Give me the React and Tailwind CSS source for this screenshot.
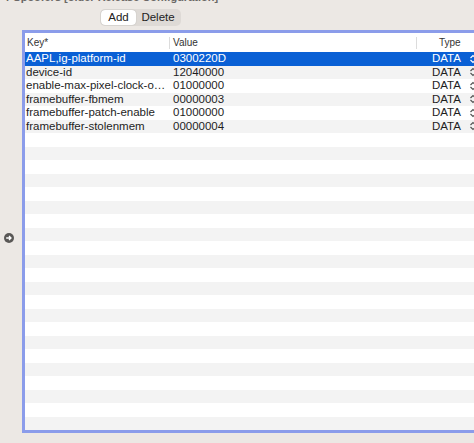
import React from "react";

const rows = [
  ["AAPL,ig-platform-id", "0300220D"],
  ["device-id", "12040000"],
  ["enable-max-pixel-clock-override", "01000000"],
  ["framebuffer-fbmem", "00000003"],
  ["framebuffer-patch-enable", "01000000"],
  ["framebuffer-stolenmem", "00000004"],
];

function Stepper({ white }) {
  const c = white ? "#ffffff" : "#555555";
  return (
    <svg width="8" height="10" viewBox="0 0 8 10" className="shrink-0">
      <path d="M1.5 4 L4 1.5 L6.5 4" fill="none" stroke={c} strokeWidth="1.2" />
      <path d="M1.5 6 L4 8.5 L6.5 6" fill="none" stroke={c} strokeWidth="1.2" />
    </svg>
  );
}

export default function App() {
  const total = 28;
  const list = Array.from({ length: total }, (_, i) => rows[i] || null);
  return (
    <div
      className="w-[474px] h-[443px] overflow-hidden bg-[#ece8e4] flex flex-col"
      style={{ fontFamily: '"Liberation Sans", Arial, sans-serif' }}
    >
      <div className="h-[9px] overflow-hidden pl-[6px]">
        <div className="-mt-[9px] text-[11px] leading-[12px] font-bold text-[#6b6866] whitespace-nowrap">
          r Spoofers [older Release Configuration]
        </div>
      </div>
      <div className="h-[21px] flex items-start">
        <div className="ml-[100px] h-[17px] w-[81px] rounded-[5px] bg-[#dedad6] flex items-center p-[1px] text-[11.5px] text-[#222]">
          <div className="h-[15px] w-[35px] rounded-[4px] bg-white shadow-[0_0_1px_rgba(0,0,0,0.3)] flex items-center justify-center">
            Add
          </div>
          <div className="flex-1 flex items-center justify-center">Delete</div>
        </div>
      </div>
      <div className="flex h-[403px]">
        <div className="w-[22px] shrink-0 flex items-center justify-center pt-[12px] pr-[4px]">
          <svg width="10" height="10" viewBox="0 0 10 10">
            <circle cx="5" cy="5" r="5" fill="#5a5856" />
            <path d="M2.2 5 H7 M5 3 L7 5 L5 7" fill="none" stroke="#fff" strokeWidth="1.3" />
          </svg>
        </div>
        <div className="w-[470px] shrink-0 border-[3px] border-[#8b9cea] bg-white overflow-hidden">
          <div className="h-[19px] flex items-center text-[10px] text-[#333] bg-white">
            <div className="w-[144px] pl-[2px]">Key*</div>
            <div className="w-px h-[12px] bg-[#dcdcdc]" />
            <div className="w-[246px] pl-[3px]">Value</div>
            <div className="w-px h-[12px] bg-[#dcdcdc]" />
            <div className="pl-[22px]">Type</div>
          </div>
          {list.map((r, i) => {
            const sel = i === 0;
            const bg = sel ? "bg-[#0a60d5]" : i % 2 === 1 ? "bg-[#f3f3f3]" : "bg-white";
            const tc = sel ? "text-white" : "text-[#1e1e1e]";
            return (
              <div key={i} className={`h-[13.5px] flex items-center text-[11.5px] leading-[13px] ${bg} ${tc}`}>
                {r && (
                  <>
                    <div className="w-[142px] pl-[1px] truncate">{r[0]}</div>
                    <div className="w-[265px] pl-[6px]">{r[1]}</div>
                    <div className="w-[37px]">DATA</div>
                    <Stepper white={sel} />
                  </>
                )}
              </div>
            );
          })}
        </div>
      </div>
    </div>
  );
}
